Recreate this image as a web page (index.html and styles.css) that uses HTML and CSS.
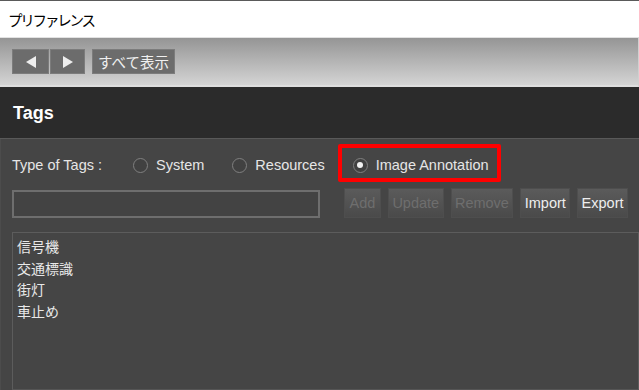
FILE: index.html
```html
<!DOCTYPE html>
<html lang="ja">
<head>
<meta charset="utf-8">
<title>プリファレンス</title>
<link rel="stylesheet" href="styles.css">
</head>
<body>
<div class="window">
  <div class="titlebar">プリファレンス</div>
  <div class="toolbar">
    <div class="navgroup">
      <button class="tbtn nav" aria-label="back"><svg width="10" height="12" viewBox="0 0 10 12"><polygon points="10,0 10,12 0,6" fill="#eeeeee"/></svg></button>
      <button class="tbtn nav" aria-label="forward"><svg width="10" height="12" viewBox="0 0 10 12"><polygon points="0,0 0,12 10,6" fill="#eeeeee"/></svg></button>
    </div>
    <button class="tbtn showall">すべて表示</button>
  </div>
  <div class="header">Tags</div>
  <div class="panel">
    <div class="typerow">
      <span class="typelabel">Type of Tags :</span>
      <label class="radio"><span class="dot"></span>System</label>
      <label class="radio"><span class="dot"></span>Resources</label>
      <label class="radio checked highlight"><span class="dot"></span>Image Annotation</label>
    </div>
    <div class="editrow">
      <div class="textbox"></div>
      <div class="actions">
        <button class="abtn disabled">Add</button>
        <button class="abtn disabled">Update</button>
        <button class="abtn disabled">Remove</button>
        <button class="abtn">Import</button>
        <button class="abtn">Export</button>
      </div>
    </div>
    <ul class="taglist">
      <li>信号機</li>
      <li>交通標識</li>
      <li>街灯</li>
      <li>車止め</li>
    </ul>
  </div>
</div>
</body>
</html>
```
FILE: styles.css
```css
* { box-sizing: border-box; }
html, body { margin: 0; padding: 0; }
body {
  width: 639px;
  height: 390px;
  overflow: hidden;
  background: #454545;
  font-family: "Liberation Sans", Arial, "Noto Sans CJK JP", sans-serif;
}
.window {
  display: flex;
  flex-direction: column;
  height: 390px;
  border-top: 1px solid #5a5a5a;
}
.titlebar {
  height: 36px;
  background: #ffffff;
  color: #000;
  font-family: "Noto Sans CJK JP", sans-serif;
  font-size: 14.5px;
  letter-spacing: -2.2px;
  padding-left: 8px;
  line-height: 38px;
}
.toolbar {
  height: 50px;
  border-top: 1px solid #e2e2e2;
  border-bottom: 2px solid #dedede;
  border-right: 1px solid #d0d0d0;
  background: linear-gradient(#959595, #d4d4d4);
  display: flex;
  align-items: flex-start;
  gap: 7px;
  padding: 11px 12px 0;
}
.navgroup { display: flex; gap: 1px; }
.tbtn {
  height: 25px;
  margin: 0;
  background: #6c6c6c;
  border: 1px solid #7c7c7c;
  color: #f0f0f0;
  padding: 0;
  display: flex;
  align-items: center;
  justify-content: center;
  font-family: "Noto Sans CJK JP", sans-serif;
}
.nav { width: 37px; }
.nav + .nav { width: 35px; }
.showall {
  width: 83px;
  font-size: 14.5px;
  line-height: 1;
  padding-top: 1px;
}
.header {
  height: 52px;
  background: #2b2b2b;
  border-bottom: 1px solid #595959;
  color: #ffffff;
  font-weight: bold;
  font-size: 18px;
  line-height: 52px;
  padding-left: 13px;
}
.panel {
  flex: 1;
  display: flex;
  flex-direction: column;
  padding: 16px 0 0 0;
  border-left: 1px solid #4c4c4c;
  color: #e6e6e6;
  font-size: 14.5px;
}
.typerow {
  display: flex;
  align-items: center;
  height: 20px;
  padding-left: 11px;
}
.typelabel { margin-right: 31px; }
.radio {
  display: flex;
  align-items: center;
  height: 20px;
  gap: 8px;
  margin-right: 28px;
  position: relative;
}
.dot {
  width: 15px;
  height: 15px;
  border-radius: 50%;
  border: 1px solid #808080;
  background: #414141;
  display: flex;
  align-items: center;
  justify-content: center;
}
.checked .dot::after {
  content: "";
  width: 6px;
  height: 6px;
  border-radius: 50%;
  background: #f2f2f2;
}
.highlight::before {
  content: "";
  position: absolute;
  left: -15px;
  right: -12px;
  top: -11px;
  bottom: -7px;
  border: 4px solid #ff0000;
  border-radius: 2px;
}
.editrow {
  display: flex;
  align-items: flex-end;
  margin-top: 13px;
  padding-left: 11px;
}
.textbox {
  width: 308px;
  height: 28px;
  border: 2px solid #6e6e6e;
  background: #434343;
}
.actions {
  display: flex;
  gap: 7px;
  margin-left: 24px;
}
.abtn {
  height: 30px;
  min-width: 37px;
  margin: 0;
  padding: 0 3.4px;
  border: 1px solid #4e4e4e;
  background: linear-gradient(#5b5b5b, #4a4a4a);
  color: #eeeeee;
  font-family: "Liberation Sans", Arial, sans-serif;
  font-size: 14.5px;
}
.abtn.disabled { color: #6e6e6e; }
.taglist {
  flex: 1;
  list-style: none;
  margin: 14px 0 0 11px;
  padding: 3px 0 0 4px;
  border: 1px solid #5c5c5c;
  border-bottom-color: #555;
  font-family: "Noto Sans CJK JP", sans-serif;
  font-size: 14px;
  color: #e8e8e8;
}
.taglist li {
  height: 21.5px;
  line-height: 21.5px;
}
```
